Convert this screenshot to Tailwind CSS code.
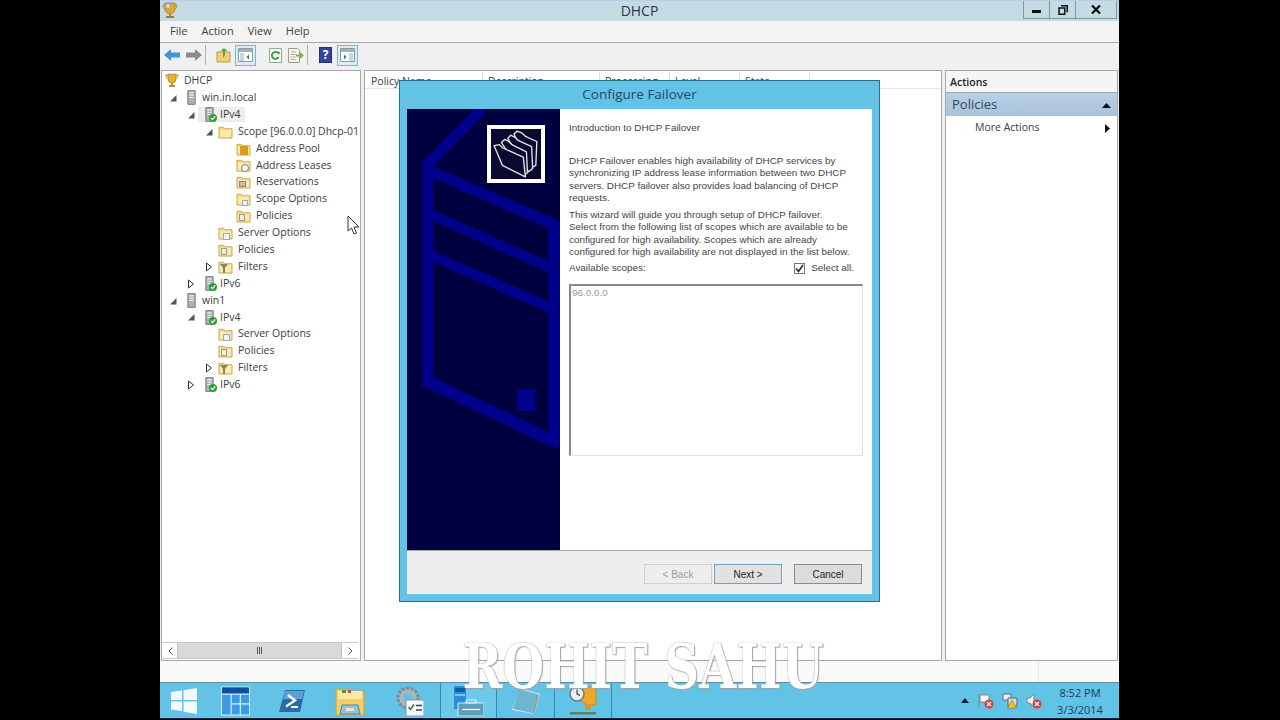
<!DOCTYPE html>
<html>
<head>
<meta charset="utf-8">
<script src="https://cdn.jsdelivr.net/npm/@tailwindcss/browser@4"></script>
</head>
<body class="bg-black">
<svg width="0" height="0" class="absolute">
  <defs>
    <symbol id="folder" viewBox="0 0 16 15"><path d="M1 2.500h5l1.500 1.500H15v10H1z" fill="#f3d684" stroke="#c9a850" stroke-width="1"/><path d="M2 5h12v8H2z" fill="#fbeaae"/></symbol>
    <symbol id="server" viewBox="0 0 12 16"><path d="M2 .5h8v15H2z" fill="#a9b1b5" stroke="#6f787d"/><path d="M3.500 3h5M3.500 5.500h5M3.500 8h5" stroke="#eef1f2" stroke-width="1.200"/></symbol>
    <symbol id="check" viewBox="0 0 8 8"><circle cx="4" cy="4" r="4" fill="#2e9e3a"/><path d="M2 4l1.500 1.600L6.200 2.400" stroke="#fff" stroke-width="1.300" fill="none"/></symbol>
    <symbol id="open" viewBox="0 0 8 8"><path d="M1 7.500h6.500V1z" fill="#555"/></symbol>
    <symbol id="closed" viewBox="0 0 8 10"><path d="M1.500 1v8l5-4z" fill="#fff" stroke="#333"/></symbol>
  </defs>
</svg>

<div class="relative ml-[160px] w-[959px] h-[719px] bg-[#f0f0f0] flex flex-col overflow-hidden font-['Open_Sans',sans-serif] text-[#3c3c3c] border-b border-[#12283a]">

  <!-- title bar -->
  <div class="h-[21px] shrink-0 bg-[#c5dbe4] border-t border-[#b9cfe6] flex items-start justify-between relative">
    <svg class="ml-[2px] mt-[1px]" width="16" height="17" viewBox="0 0 16 17">
      <path d="M3 1h10v6a5 5 0 0 1-10 0z" fill="#e3a92a" stroke="#a37518" stroke-width=".7"/>
      <path d="M3 3H1c0 3 1 4 3 4.500M13 3h2c0 3-1 4-3 4.500" fill="none" stroke="#b98c26"/>
      <path d="M7 11h2v3H7z" fill="#c78e1c"/><path d="M4 14h8v2H4z" fill="#8f7a4a"/>
      <circle cx="6" cy="4" r="2.500" fill="#d8dee2" stroke="#7b8690" stroke-width=".6"/>
    </svg>
    <span class="absolute left-0 right-0 top-0 text-center text-[14px] leading-[19px] text-[#334]">DHCP</span>
    <div class="flex h-[18px] mr-[2px] text-[#111] border-b border-l border-r border-[#7f97a3]">
      <div class="w-[26px] flex items-center justify-center border-r border-[#7f97a3]"><span class="block w-[9px] h-[3px] bg-[#111] mt-[3px]"></span></div>
      <div class="w-[26px] flex items-center justify-center border-r border-[#7f97a3]">
        <svg width="10" height="10" viewBox="0 0 10 10"><path d="M3 .8h6.200v6.400M1 3h5.800v6.200H1z" fill="none" stroke="#111" stroke-width="1.500"/></svg>
      </div>
      <div class="w-[40px] flex items-center justify-center">
        <svg width="10" height="9" viewBox="0 0 10 9"><path d="M1 .5l8 8M9 .5l-8 8" stroke="#111" stroke-width="2.200"/></svg>
      </div>
    </div>
  </div>

  <!-- menu -->
  <div class="h-[21px] shrink-0 flex items-center gap-[14px] pl-[10px] text-[11px] bg-[#f3f3f3]">
    <span>File</span><span>Action</span><span>View</span><span>Help</span>
  </div>

  <!-- toolbar -->
  <div class="h-[28px] shrink-0 border-t border-[#a8a8a8] flex items-center pl-[4px] pb-[3px]">
    <svg width="16" height="14" viewBox="0 0 16 14"><path d="M0 7l7-6v3.500h9v5H7V13z" fill="#3f97d6"/></svg>
    <svg class="ml-[6px]" width="16" height="14" viewBox="0 0 16 14"><path d="M16 7L9 1v3.500H0v5h9V13z" fill="#8c8c8c"/></svg>
    <span class="ml-[3px] w-px h-[20px] bg-[#b0b0b0]"></span>
    <svg class="ml-[10px]" width="15" height="15" viewBox="0 0 15 15"><path d="M1 4h13v10H1z" fill="#ecd07a" stroke="#b89a48"/><path d="M7 10V3H4.500L8 0l3.500 3H9v4z" fill="#5aa848"/></svg>
    <div class="ml-[4px] w-[21px] h-[21px] border border-[#7fb4d2] bg-[#dcecf6] flex items-center justify-center">
      <svg width="15" height="14" viewBox="0 0 15 14"><path d="M.5.500h14v13H.5z" fill="#fff" stroke="#8a9aa4"/><path d="M1 1h13v3H1z" fill="#9fb3bf"/><path d="M2 5h4v8H2z" fill="#c9d6de"/><path d="M11 6.500L8.500 9l2.500 2.500z" fill="#4a6a7c"/></svg>
    </div>
    <svg class="ml-[13px]" width="13" height="15" viewBox="0 0 13 15"><path d="M.5.500h12v14H.5z" fill="#f4f8f4" stroke="#9aa69a"/><path d="M9.500 9A3.500 3.500 0 1 1 9 5" fill="none" stroke="#3d9a4a" stroke-width="1.800"/><path d="M7.500 3.500l3.500.5-1 3z" fill="#3d9a4a"/></svg>
    <svg class="ml-[6px]" width="16" height="15" viewBox="0 0 16 15"><path d="M.5.500h9l2 2v12H.5z" fill="#faf8ec" stroke="#9c9c8c"/><path d="M2.500 4h6M2.500 6.500h5M2.500 9h5M2.500 11.500h5" stroke="#a8a8a0"/><path d="M8 6.500h4V4l4 3.500-4 3.500V8.500H8z" fill="#7fb23e"/></svg>
    <span class="ml-[3px] w-px h-[20px] bg-[#b0b0b0]"></span>
    <div class="ml-[11px] w-[13px] h-[16px] bg-[#34439c] border border-[#26307a] text-white text-[12px] font-bold leading-[14px] text-center">?</div>
    <div class="ml-[5px] w-[21px] h-[21px] border border-[#7fb4d2] bg-[#dcecf6] flex items-center justify-center">
      <svg width="15" height="14" viewBox="0 0 15 14"><path d="M.5.500h14v13H.5z" fill="#fff" stroke="#8a9aa4"/><path d="M1 1h13v3H1z" fill="#9fb3bf"/><path d="M9 5h4v8H9z" fill="#c9d6de"/><path d="M4 6.500L6.500 9 4 11.500z" fill="#4a6a7c"/></svg>
    </div>
  </div>

  <!-- panes -->
  <div class="h-[591px] shrink-0 flex pl-px pr-px">
    <!-- tree -->
    <div class="w-[200px] h-full border border-[#a6a6a6] bg-white flex flex-col text-[10.500px]">
      <div class="flex-1 pt-[1.500px] min-h-0">
        <div class="flex items-center h-[16.900px]"><span class="w-[20px] flex justify-center"><svg width="14" height="15" viewBox="0 0 14 15"><path d="M3 1h8v5a4 4 0 0 1-8 0z" fill="#e3b32e" stroke="#a37518" stroke-width=".6"/><path d="M3 2H1c0 2.500 1 3.500 2.500 4M11 2h2c0 2.500-1 3.500-2.500 4" fill="none" stroke="#b98c26"/><path d="M6 10h2v2H6zM4 12h6v2H4z" fill="#b5952f"/></svg></span><span class="ml-[2px]">DHCP</span></div>

        <div class="flex items-center h-[16.900px] pl-[4px]"><svg class="w-[14px]" width="8" height="8"><use href="#open"/></svg><span class="w-[22px] flex justify-center"><svg width="11" height="15"><use href="#server"/></svg></span><span>win.in.local</span></div>

        <div class="flex items-center h-[16.900px] pl-[22px]"><svg class="w-[14px]" width="8" height="8"><use href="#open"/></svg><span class="flex items-center h-[15px] bg-[#ededed] pr-[4px]"><span class="relative w-[22px] flex justify-center"><svg width="11" height="15"><use href="#server"/></svg><svg class="absolute right-[3px] bottom-0" width="8" height="8"><use href="#check"/></svg></span><span>IPv4</span></span></div>

        <div class="flex items-center h-[16.900px] pl-[40px]"><svg class="w-[14px]" width="8" height="8"><use href="#open"/></svg><span class="w-[22px] flex justify-center pr-[4px]"><svg width="15" height="14"><use href="#folder"/></svg></span><span class="whitespace-nowrap overflow-hidden w-[122px]">Scope [96.0.0.0] Dhcp-01</span></div>

        <div class="flex items-center h-[16.900px] pl-[72px]"><span class="relative w-[22px] flex justify-center pr-[4px]"><svg width="15" height="14"><use href="#folder"/></svg><span class="absolute left-[6px] top-[4px] w-[8px] h-[9px] bg-[#d99a1e]"></span></span><span>Address Pool</span></div>
        <div class="flex items-center h-[16.900px] pl-[72px]"><span class="relative w-[22px] flex justify-center pr-[4px]"><svg width="15" height="14"><use href="#folder"/></svg><span class="absolute left-[7px] top-[6px] w-[8px] h-[8px] rounded-full bg-white border border-[#777]"></span></span><span>Address Leases</span></div>
        <div class="flex items-center h-[16.900px] pl-[72px]"><span class="relative w-[22px] flex justify-center pr-[4px]"><svg width="15" height="14"><use href="#folder"/></svg><span class="absolute left-[5px] top-[6px] w-[7px] h-[6px] bg-[#c8c09a] border border-[#888]"></span></span><span>Reservations</span></div>
        <div class="flex items-center h-[16.900px] pl-[72px]"><span class="relative w-[22px] flex justify-center pr-[4px]"><svg width="15" height="14"><use href="#folder"/></svg><span class="absolute left-[8px] top-[8px] w-[6px] h-[6px] bg-[#eef2f6] border border-[#9ab]"></span></span><span>Scope Options</span></div>
        <div class="flex items-center h-[16.900px] pl-[72px]"><span class="relative w-[22px] flex justify-center pr-[4px]"><svg width="15" height="14"><use href="#folder"/></svg><span class="absolute left-[5px] top-[5px] w-[6px] h-[7px] bg-[#f6f2dc] border border-[#999]"></span></span><span>Policies</span></div>

        <div class="flex items-center h-[16.900px] pl-[54px]"><span class="relative w-[22px] flex justify-center pr-[4px]"><svg width="15" height="14"><use href="#folder"/></svg><span class="absolute left-[7px] top-[7px] w-[7px] h-[7px] bg-[#eef2f6] border border-[#9ab]"></span></span><span>Server Options</span></div>
        <div class="flex items-center h-[16.900px] pl-[54px]"><span class="relative w-[22px] flex justify-center pr-[4px]"><svg width="15" height="14"><use href="#folder"/></svg><span class="absolute left-[5px] top-[5px] w-[6px] h-[7px] bg-[#f6f2dc] border border-[#999]"></span></span><span>Policies</span></div>
        <div class="flex items-center h-[16.900px] pl-[40px]"><svg class="w-[14px]" width="8" height="10"><use href="#closed"/></svg><span class="relative w-[22px] flex justify-center pr-[4px]"><svg width="15" height="14"><use href="#folder"/></svg><svg class="absolute left-[4px] top-[4px]" width="8" height="9" viewBox="0 0 8 9"><path d="M0 0h8L5 4v5H3V4z" fill="#7f8a60"/></svg></span><span>Filters</span></div>
        <div class="flex items-center h-[16.900px] pl-[22px]"><svg class="w-[14px]" width="8" height="10"><use href="#closed"/></svg><span class="relative w-[22px] flex justify-center"><svg width="11" height="15"><use href="#server"/></svg><svg class="absolute right-[3px] bottom-0" width="8" height="8"><use href="#check"/></svg></span><span>IPv6</span></div>

        <div class="flex items-center h-[16.900px] pl-[4px]"><svg class="w-[14px]" width="8" height="8"><use href="#open"/></svg><span class="w-[22px] flex justify-center"><svg width="11" height="15"><use href="#server"/></svg></span><span>win1</span></div>
        <div class="flex items-center h-[16.900px] pl-[22px]"><svg class="w-[14px]" width="8" height="8"><use href="#open"/></svg><span class="relative w-[22px] flex justify-center"><svg width="11" height="15"><use href="#server"/></svg><svg class="absolute right-[3px] bottom-0" width="8" height="8"><use href="#check"/></svg></span><span>IPv4</span></div>
        <div class="flex items-center h-[16.900px] pl-[54px]"><span class="relative w-[22px] flex justify-center pr-[4px]"><svg width="15" height="14"><use href="#folder"/></svg><span class="absolute left-[7px] top-[7px] w-[7px] h-[7px] bg-[#eef2f6] border border-[#9ab]"></span></span><span>Server Options</span></div>
        <div class="flex items-center h-[16.900px] pl-[54px]"><span class="relative w-[22px] flex justify-center pr-[4px]"><svg width="15" height="14"><use href="#folder"/></svg><span class="absolute left-[5px] top-[5px] w-[6px] h-[7px] bg-[#f6f2dc] border border-[#999]"></span></span><span>Policies</span></div>
        <div class="flex items-center h-[16.900px] pl-[40px]"><svg class="w-[14px]" width="8" height="10"><use href="#closed"/></svg><span class="relative w-[22px] flex justify-center pr-[4px]"><svg width="15" height="14"><use href="#folder"/></svg><svg class="absolute left-[4px] top-[4px]" width="8" height="9" viewBox="0 0 8 9"><path d="M0 0h8L5 4v5H3V4z" fill="#7f8a60"/></svg></span><span>Filters</span></div>
        <div class="flex items-center h-[16.900px] pl-[22px]"><svg class="w-[14px]" width="8" height="10"><use href="#closed"/></svg><span class="relative w-[22px] flex justify-center"><svg width="11" height="15"><use href="#server"/></svg><svg class="absolute right-[3px] bottom-0" width="8" height="8"><use href="#check"/></svg></span><span>IPv6</span></div>
      </div>
      <!-- scrollbar -->
      <div class="h-[17px] shrink-0 mb-[1px] mr-[2px] ml-[1px] flex bg-[#f0f0f0] border-y border-[#c8c8c8] text-[#555]">
        <div class="w-[15px] flex items-center justify-center bg-white border-r border-[#c0c0c0]"><svg width="5" height="8" viewBox="0 0 5 8"><path d="M4.500.5L1 4l3.500 3.500" fill="none" stroke="#555"/></svg></div>
        <div class="flex-1 bg-[#d9d9d9] flex items-center justify-center gap-[1px]"><span class="w-px h-[7px] bg-[#555]"></span><span class="w-px h-[7px] bg-[#555]"></span><span class="w-px h-[7px] bg-[#555]"></span></div>
        <div class="w-[17px] flex items-center justify-center bg-white border-l border-[#c0c0c0]"><svg width="5" height="8" viewBox="0 0 5 8"><path d="M.5.500L4 4 .5 7.500" fill="none" stroke="#555"/></svg></div>
      </div>
    </div>

    <!-- center -->
    <div class="ml-[3px] w-[578px] h-full border border-[#a6a6a6] bg-white">
      <div class="h-[18px] pt-[1px] flex text-[10.500px] border-b border-[#e5e5e5] leading-[18px]">
        <div class="w-[118px] pl-[6px] border-r border-[#e0e0e0]">Policy Name</div>
        <div class="w-[117px] pl-[5px] border-r border-[#e0e0e0]">Description</div>
        <div class="w-[70px] pl-[5px] border-r border-[#e0e0e0]">Processing</div>
        <div class="w-[70px] pl-[5px] border-r border-[#e0e0e0]">Level</div>
        <div class="w-[70px] pl-[5px] border-r border-[#e0e0e0]">State</div>
      </div>
    </div>

    <!-- actions -->
    <div class="ml-[3px] flex-1 h-full border border-[#a6a6a6] bg-white">
      <div class="h-[22px] pt-[2px] flex items-center pl-[4px] text-[10.500px] font-semibold text-[#222] bg-[#f5f5f5] border-b border-[#a8a8a8]">Actions</div>
      <div class="h-[23px] pt-[1px] flex items-center justify-between pl-[6px] pr-[6px] text-[13px] text-[#33475a] bg-linear-to-b from-[#b9d0e6] to-[#a7c2da]">
        <span>Policies</span>
        <svg width="9" height="5" viewBox="0 0 9 5"><path d="M0 5L4.500 0 9 5z" fill="#111"/></svg>
      </div>
      <div class="h-[22px] pt-[2px] flex items-center justify-between pl-[29px] pr-[7px] text-[10.500px]">
        <span>More Actions</span>
        <svg width="5" height="9" viewBox="0 0 5 9"><path d="M0 0l5 4.500L0 9z" fill="#111"/></svg>
      </div>
    </div>
  </div>

  <!-- strip under panes -->
  <div class="h-[21px] shrink-0 bg-[#fafafa] flex justify-end">
    <span class="w-px h-full bg-[#e8e8e8] mr-[80px]"></span>
  </div>

  <!-- taskbar -->
  <div class="flex-1 bg-[#62c3e7] border-t border-[#5f8ea6] flex items-center relative">
    <div class="w-[280px] flex items-center">
      <div class="w-[48px] flex justify-center">
        <svg width="26" height="26" viewBox="0 0 26 26"><path d="M0 4l11-1.500V12H0zM12.500 2.300L26 0v12H12.500zM0 13.500h11V23L0 21.500zM12.500 13.500H26V26l-13.500-2.200z" fill="#f3fafd"/></svg>
      </div>
      <div class="w-[55px] flex justify-center">
        <svg width="29" height="30" viewBox="0 0 30 30"><path d="M.5.500h29v29H.5z" fill="#3c9be6" stroke="#dff1fb"/><path d="M1 1h28v6H1z" fill="#0c4f9c"/><path d="M10.500 8v21M20 8v21M10.500 18h19M1 8h28" stroke="#dff1fb" stroke-width="1.200"/></svg>
      </div>
      <div class="w-[58px] flex justify-center">
        <svg width="26" height="22" viewBox="0 0 26 22"><path d="M6 0h20l-5 22H0z" fill="#2a6aa8"/><path d="M6 1h19l-2 8H4z" fill="#5aa2d0"/><path d="M9 5l7 5.500-9 6" fill="none" stroke="#fff" stroke-width="2.400"/><path d="M12 17h7" stroke="#fff" stroke-width="2"/></svg>
      </div>
      <div class="w-[58px] flex justify-center">
        <svg width="30" height="28" viewBox="0 0 30 28"><path d="M1 2h10l2 2h16v24H1z" fill="#f0cf63" stroke="#c9a23a"/><path d="M3 4h24v8H3z" fill="#fbeaa5"/><path d="M7 3h4v3H7z" fill="#4a9a4a"/><path d="M13 3h3v3h-3z" fill="#d24a3a"/><path d="M7 18h16l2 9H5z" fill="#8fc4e2" stroke="#4a86ad"/><path d="M11 21h8v3h-8z" fill="#f0e6b8"/></svg>
      </div>
      <div class="w-[61px] flex justify-center relative">
        <svg width="28" height="30" viewBox="0 0 28 30"><circle cx="12" cy="12" r="10" fill="#aeb6bb" stroke="#7f8b92" stroke-width="3" stroke-dasharray="3 1.500"/><circle cx="12" cy="12" r="5" fill="#62c3e7"/><path d="M10 14h18v16H10z" fill="#f6f8f9" stroke="#8a99a3"/><path d="M12.500 21l2 2.500 3.500-5" fill="none" stroke="#2e7f3e" stroke-width="1.500"/><path d="M20 19.500h6M20 24h6" stroke="#34495c" stroke-width="1.500"/></svg>
      </div>
    </div>
    <div class="w-[57px] self-stretch flex items-center justify-center border-x border-[#3a87ad] bg-[#6cc9ea]">
      <svg width="30" height="30" viewBox="0 0 30 30"><path d="M0 0h12v23H0z" fill="#2c8ed8"/><path d="M1 2h10v4H1z" fill="#0f5ca8"/><path d="M1 9h10" stroke="#dff1fb"/><path d="M4 17h26v13H4z" fill="#5f9db8" stroke="#dcecf4"/><path d="M12 14h10v3H12z" fill="none" stroke="#dcecf4"/><path d="M8 23.500h18" stroke="#fff" stroke-width="1.200"/></svg>
    </div>
    <div class="w-[58px] self-stretch flex items-center justify-center border-r border-[#3a87ad]">
      <svg width="28" height="26" viewBox="0 0 28 26"><path d="M8 0l20 6-6 20-22-4z" fill="#dbe8ec"/><path d="M7 1l18 5-5 19L1 21z" fill="#6db6cf"/><path d="M25 6l2 1-5 19-2-1z" fill="#8a9aa0"/></svg>
    </div>
    <div class="w-[57px] self-stretch flex items-center justify-center border-r border-[#3a87ad]">
      <svg width="28" height="31" viewBox="0 0 28 31"><path d="M12 2h12c2 0 3 1 3 3v15h-9l-6-4z" fill="#eea928" stroke="#b97c18" stroke-width=".7"/><path d="M16 20h6v5h-6z" fill="#dd961f"/><path d="M1 27h26v2.500H1z" fill="#5f7f6c"/><circle cx="8" cy="9" r="7" fill="#e9eef0" stroke="#6a7a84" stroke-width="1.500"/><path d="M8 4.500V9l3 1.500" fill="none" stroke="#333" stroke-width="1.100"/></svg>
    </div>
    <!-- tray -->
    <div class="ml-auto flex items-center mr-[1px] h-full">
      <svg width="8" height="5" viewBox="0 0 8 5"><path d="M0 5l4-5 4 5z" fill="#123"/></svg>
      <svg class="ml-[9px]" width="16" height="16" viewBox="0 0 16 16"><path d="M1 1v14M2 2h9v7H2z" fill="#f4f6f7" stroke="#7b8a94"/><circle cx="11" cy="11" r="4.500" fill="#d4413f"/><path d="M9 9l4 4M13 9l-4 4" stroke="#fff" stroke-width="1.300"/></svg>
      <svg class="ml-[8px]" width="16" height="16" viewBox="0 0 16 16"><path d="M1 1h8v6H1z" fill="#e7eff2" stroke="#5f7280"/><path d="M6 5h9v8H6z" fill="#cfe0e6" stroke="#4e6673"/><path d="M10 7l4.500 8h-9z" fill="#f2c414" stroke="#8f7308" stroke-width=".6"/></svg>
      <svg class="ml-[8px]" width="16" height="16" viewBox="0 0 16 16"><path d="M1 5h3l4-4v13l-4-4H1z" fill="#eef3f5" stroke="#76858e"/><circle cx="11" cy="11" r="4.500" fill="#d4413f"/><path d="M9 9l4 4M13 9l-4 4" stroke="#fff" stroke-width="1.300"/></svg>
      <div class="w-[76px] text-center text-[11px] leading-[17px] text-[#1e3a52]">
        <div>8:52 PM</div><div>3/3/2014</div>
      </div>
    </div>
  </div>

  <!-- cursor -->
  <svg class="absolute left-[187px] top-[215px]" width="14" height="21" viewBox="0 0 14 21"><path d="M1 1v15l3.500-3 2.500 6 2.500-1-2.500-6H12z" fill="#fff" stroke="#333"/></svg>

  <!-- dialog -->
  <div class="absolute left-[239px] top-[80px] w-[481px] h-[522px] bg-[#62c3e7] border border-[#2b6f8c] flex flex-col px-[7px] pb-[7px] font-['Liberation_Sans',sans-serif]">
    <div class="h-[28px] shrink-0 text-center leading-[27px] text-[13.500px] text-[#25465e] font-['Open_Sans',sans-serif]">Configure Failover</div>
    <div class="flex-1 flex flex-col bg-white min-h-0">
      <div class="flex h-[441px] shrink-0">
        <div class="relative w-[153px] shrink-0 bg-[#000040]">
          <svg width="153" height="441" viewBox="0 0 153 441" fill="none" stroke="#00008a">
            <path d="M75 0L23 53" stroke-width="11"/>
            <path d="M21 50V273" stroke-width="11"/>
            <path d="M25 63L153 118" stroke-width="11"/>
            <path d="M25 106L146 160" stroke-width="10"/>
            <path d="M25 147L146 200" stroke-width="10"/>
            <path d="M17 271L153 335" stroke-width="12"/>
            <path d="M147 112V332" stroke-width="11"/>
            <path d="M110 280h18v22h-18z" fill="#00008a" stroke="none"/>
          </svg>
          <div class="absolute left-[80px] top-[16px] w-[58px] h-[58px] bg-[#0a0a30] border-[4px] border-white flex items-center justify-center">
            <svg width="50" height="50" viewBox="0 0 48 48" fill="#0a0a30" stroke="#e4e4e4" stroke-width="1.300" stroke-linejoin="round"><path d="M22 5l3-3 5 2 3 3 11 5-1 23-4 2z"/><path d="M16 9l3-3 4 2 3 3 13 6 1 21-4 3z"/><path d="M10 13l3-3 4 2 3 3 14 7 1 20-4 3z"/><path d="M3 16l5-1 3 3 20 9 2 19-22-11z"/></svg>
          </div>
        </div>
        <div class="flex-1 flex flex-col pl-[9px] pr-[9px] text-[9.900px] text-[#444]">
          <div class="mt-[13px] leading-[12px] whitespace-nowrap">Introduction to DHCP Failover</div>
          <div class="mt-[21px] leading-[12.300px] whitespace-nowrap">DHCP Failover enables high availability of DHCP services by<br>synchronizing IP address lease information between two DHCP<br>servers. DHCP failover also provides load balancing of DHCP<br>requests.</div>
          <div class="mt-[5px] leading-[12.300px] whitespace-nowrap">This wizard will guide you through setup of DHCP failover.<br>Select from the following list of scopes which are available to be<br>configured for high availability. Scopes which are already<br>configured for high availability are not displayed in the list below.</div>
          <div class="mt-[3px] h-[14px] flex items-center justify-between pr-[9px]">
            <span>Available scopes:</span>
            <span class="flex items-center gap-[6px]"><span class="w-[11px] h-[11px] border border-[#777] bg-white flex items-center justify-center"><svg width="9" height="9" viewBox="0 0 9 9"><path d="M1 4.500l2.500 3L8 1" fill="none" stroke="#222" stroke-width="1.500"/></svg></span>Select all.</span>
          </div>
          <div class="mt-[9px] w-[294px] h-[172px] pt-[1px] border-t-2 border-l-2 border-t-[#8a8a8a] border-l-[#8a8a8a] border-r border-b border-r-[#e0e0e0] border-b-[#e0e0e0] pl-[1px] text-[#9a9a9a] leading-[12px]">96.0.0.0</div>
        </div>
      </div>
      <div class="flex-1 pt-[3px] bg-[#eeeeee] border-t border-[#a8a8a8] flex items-center justify-end pr-[10px] text-[10px] text-[#222]">
        <div class="w-[68px] h-[20px] border border-[#cfcfcf] text-[#9a9a9a] flex items-center justify-center">&lt; Back</div>
        <div class="ml-[2px] w-[68px] h-[20px] border border-[#6fa3c4] bg-[#e2e2e2] flex items-center justify-center">Next &gt;</div>
        <div class="ml-[12px] w-[68px] h-[20px] border border-[#8a8a8a] bg-[#dcdcdc] flex items-center justify-center">Cancel</div>
      </div>
    </div>
  </div>

  <!-- watermark -->
  <div class="absolute left-[298px] top-[641px] w-[370px] text-center text-[48px] leading-[50px] font-bold whitespace-nowrap scale-y-130 text-white font-['DejaVu_Serif',serif] [text-shadow:0_0_1px_#777,1px_1px_1px_#aaa]">ROHIT SAHU</div>
</div>
</body>
</html>
